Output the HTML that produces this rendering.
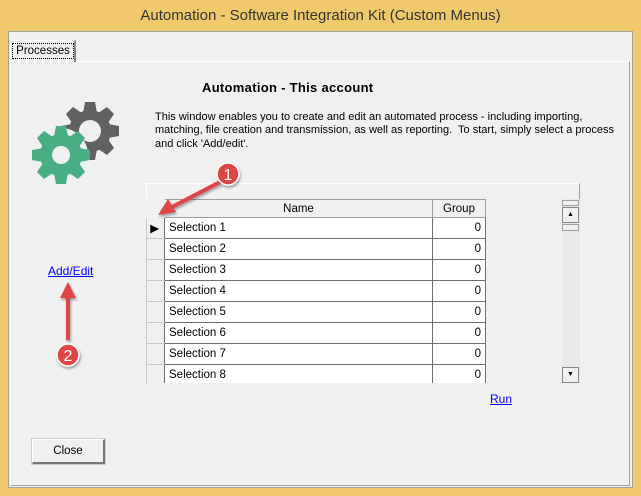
<!DOCTYPE html>
<html><head><style>
*{margin:0;padding:0;box-sizing:border-box}
body{width:641px;height:496px;background:#f0c96d;position:relative;overflow:hidden;font-family:"Liberation Sans",sans-serif;font-size:11px;color:#000}
.abs{position:absolute}
#title{left:0;top:0;width:641px;height:31px;text-align:center;line-height:32px;font-size:15px;color:#333}
#client{left:8px;top:31px;width:625px;height:457px;background:#f0f0f0;border:1px solid #a0a0a0}
#tabpanel{left:10px;top:61px;width:620px;height:425px;border-top:1px solid #fff;border-left:1px solid #fff;border-right:1px solid #a0a0a0;border-bottom:1px solid #a0a0a0}
#tab{left:10px;top:40px;width:66px;height:22px;background:#f0f0f0;border:1px solid #fff;border-right:2px solid #888;border-bottom:none}
#tab span{position:absolute;left:1px;top:2px;width:62px;height:16px;border:1px dotted #000;text-align:center;line-height:14px;font-size:11.5px}
table{border-collapse:collapse;position:absolute;left:146px;top:199px}
td{height:21px;border:1px solid #6e6e6e;background:#fff;font-size:11.5px;padding:0 4px;white-space:nowrap}
td.s{width:18px;background:#f0f0f0;border-color:#c8c8c8 #6e6e6e #c8c8c8 #c8c8c8;padding:0}
th{height:18px;font-weight:normal;border:1px solid #a0a0a0;background:#f0f0f0;font-size:11.5px}
a{color:#00f;text-decoration:underline;font-size:12px}
</style></head><body>
<div class="abs" id="title">Automation - Software Integration Kit (Custom Menus)</div>
<div class="abs" id="client"></div>
<div class="abs" id="tabpanel"></div>
<div class="abs" id="tab"><span>Processes</span></div>
<div class="abs" style="left:202px;top:80px;font-weight:bold;font-size:13px;letter-spacing:0.3px">Automation - This account</div>
<div class="abs" style="left:155px;top:111px;width:470px;font-size:11px;line-height:13.3px">This window enables you to create and edit an automated process - including importing, matching, file creation and transmission, as well as reporting.&nbsp; To start, simply select a process and click 'Add/edit'.</div>
<svg class="abs" style="left:28px;top:98px" width="100" height="90" viewBox="0 0 100 90">
<defs>
<polygon id="t1" points="-5,-29 5,-29 7,-18 -7,-18"/>
</defs>
<g transform="translate(62,33)" fill="#616161"><circle r="21"/>
<use href="#t1"/><use href="#t1" transform="rotate(45)"/><use href="#t1" transform="rotate(90)"/><use href="#t1" transform="rotate(135)"/><use href="#t1" transform="rotate(180)"/><use href="#t1" transform="rotate(225)"/><use href="#t1" transform="rotate(270)"/><use href="#t1" transform="rotate(315)"/>
<circle r="11" fill="#f0f0f0"/></g>
<g transform="translate(33,57)"><circle r="27" fill="#f0f0f0"/></g>
<g transform="translate(33,57)" fill="#4aae84"><circle r="21"/>
<use href="#t1"/><use href="#t1" transform="rotate(45)"/><use href="#t1" transform="rotate(90)"/><use href="#t1" transform="rotate(135)"/><use href="#t1" transform="rotate(180)"/><use href="#t1" transform="rotate(225)"/><use href="#t1" transform="rotate(270)"/><use href="#t1" transform="rotate(315)"/>
<circle r="9" fill="#f0f0f0"/></g>
</svg>
<div class="abs" style="left:146px;top:183px;width:434px;height:200px;background:#f0f0f0;border-top:1px solid #fff;border-left:1px solid #fff;border-right:1px solid #a0a0a0;overflow:hidden">
</div>
<div class="abs" style="left:146px;top:199px;width:434px;height:184px;overflow:hidden">
<table style="left:0;top:0">
<tr><th style="width:18px;border-color:#f0f0f0"></th><th style="width:268px">Name</th><th style="width:53px">Group</th></tr>
<tr><td class="s">&nbsp;&#9654;</td><td>Selection 1</td><td style="text-align:right">0</td></tr>
<tr><td class="s"></td><td>Selection 2</td><td style="text-align:right">0</td></tr>
<tr><td class="s"></td><td>Selection 3</td><td style="text-align:right">0</td></tr>
<tr><td class="s"></td><td>Selection 4</td><td style="text-align:right">0</td></tr>
<tr><td class="s"></td><td>Selection 5</td><td style="text-align:right">0</td></tr>
<tr><td class="s"></td><td>Selection 6</td><td style="text-align:right">0</td></tr>
<tr><td class="s"></td><td>Selection 7</td><td style="text-align:right">0</td></tr>
<tr><td class="s"></td><td>Selection 8</td><td style="text-align:right">0</td></tr>
</table>
<div class="abs" style="left:416px;top:0;width:18px;height:184px;background:#e8e8e8"></div>
<div class="abs" style="left:416px;top:1px;width:17px;height:6px;background:#f0f0f0;border:1px solid #a0a0a0"></div>
<div class="abs" style="left:416px;top:8px;width:17px;height:16px;background:#f0f0f0;border:1px solid #888;text-align:center;font-size:7px;line-height:14px">&#9650;</div>
<div class="abs" style="left:416px;top:25px;width:17px;height:7px;background:#f0f0f0;border:1px solid #a0a0a0"></div>
<div class="abs" style="left:416px;top:168px;width:17px;height:16px;background:#f0f0f0;border:1px solid #888;text-align:center;font-size:7px;line-height:14px">&#9660;</div>
</div>
<a class="abs" style="left:48px;top:264px">Add/Edit</a>
<a class="abs" style="left:490px;top:392px">Run</a>
<div class="abs" style="left:32px;top:439px;width:73px;height:25px;background:#f0f0f0;border:1px solid #fff;border-right:2px solid #777;border-bottom:2px solid #777;outline:1px solid #ccc;text-align:center;line-height:22px;font-size:11.5px">Close</div>
<svg class="abs" style="left:0;top:0" width="641" height="496">
<defs><filter id="sh"><feDropShadow dx="1" dy="2" stdDeviation="1.2" flood-opacity="0.35"/></filter></defs>
<g filter="url(#sh)" fill="#e04444" stroke="#e04444">
<line x1="222" y1="181" x2="170" y2="208" stroke-width="4"/>
<polygon points="158,215 168,199 176,212" stroke="none"/>
<circle cx="228" cy="174" r="11" stroke="#fff" stroke-width="1.5"/>
<line x1="68" y1="340" x2="68" y2="295" stroke-width="4"/>
<polygon points="68,282 60,298 76,298" stroke="none"/>
<circle cx="68" cy="355" r="11" stroke="#fff" stroke-width="1.5"/>
</g>
<text x="228" y="180" fill="#fff" font-family="Liberation Sans" font-size="16" text-anchor="middle">1</text>
<text x="68" y="361" fill="#fff" font-family="Liberation Sans" font-size="16" text-anchor="middle">2</text>
</svg>
</body></html>
